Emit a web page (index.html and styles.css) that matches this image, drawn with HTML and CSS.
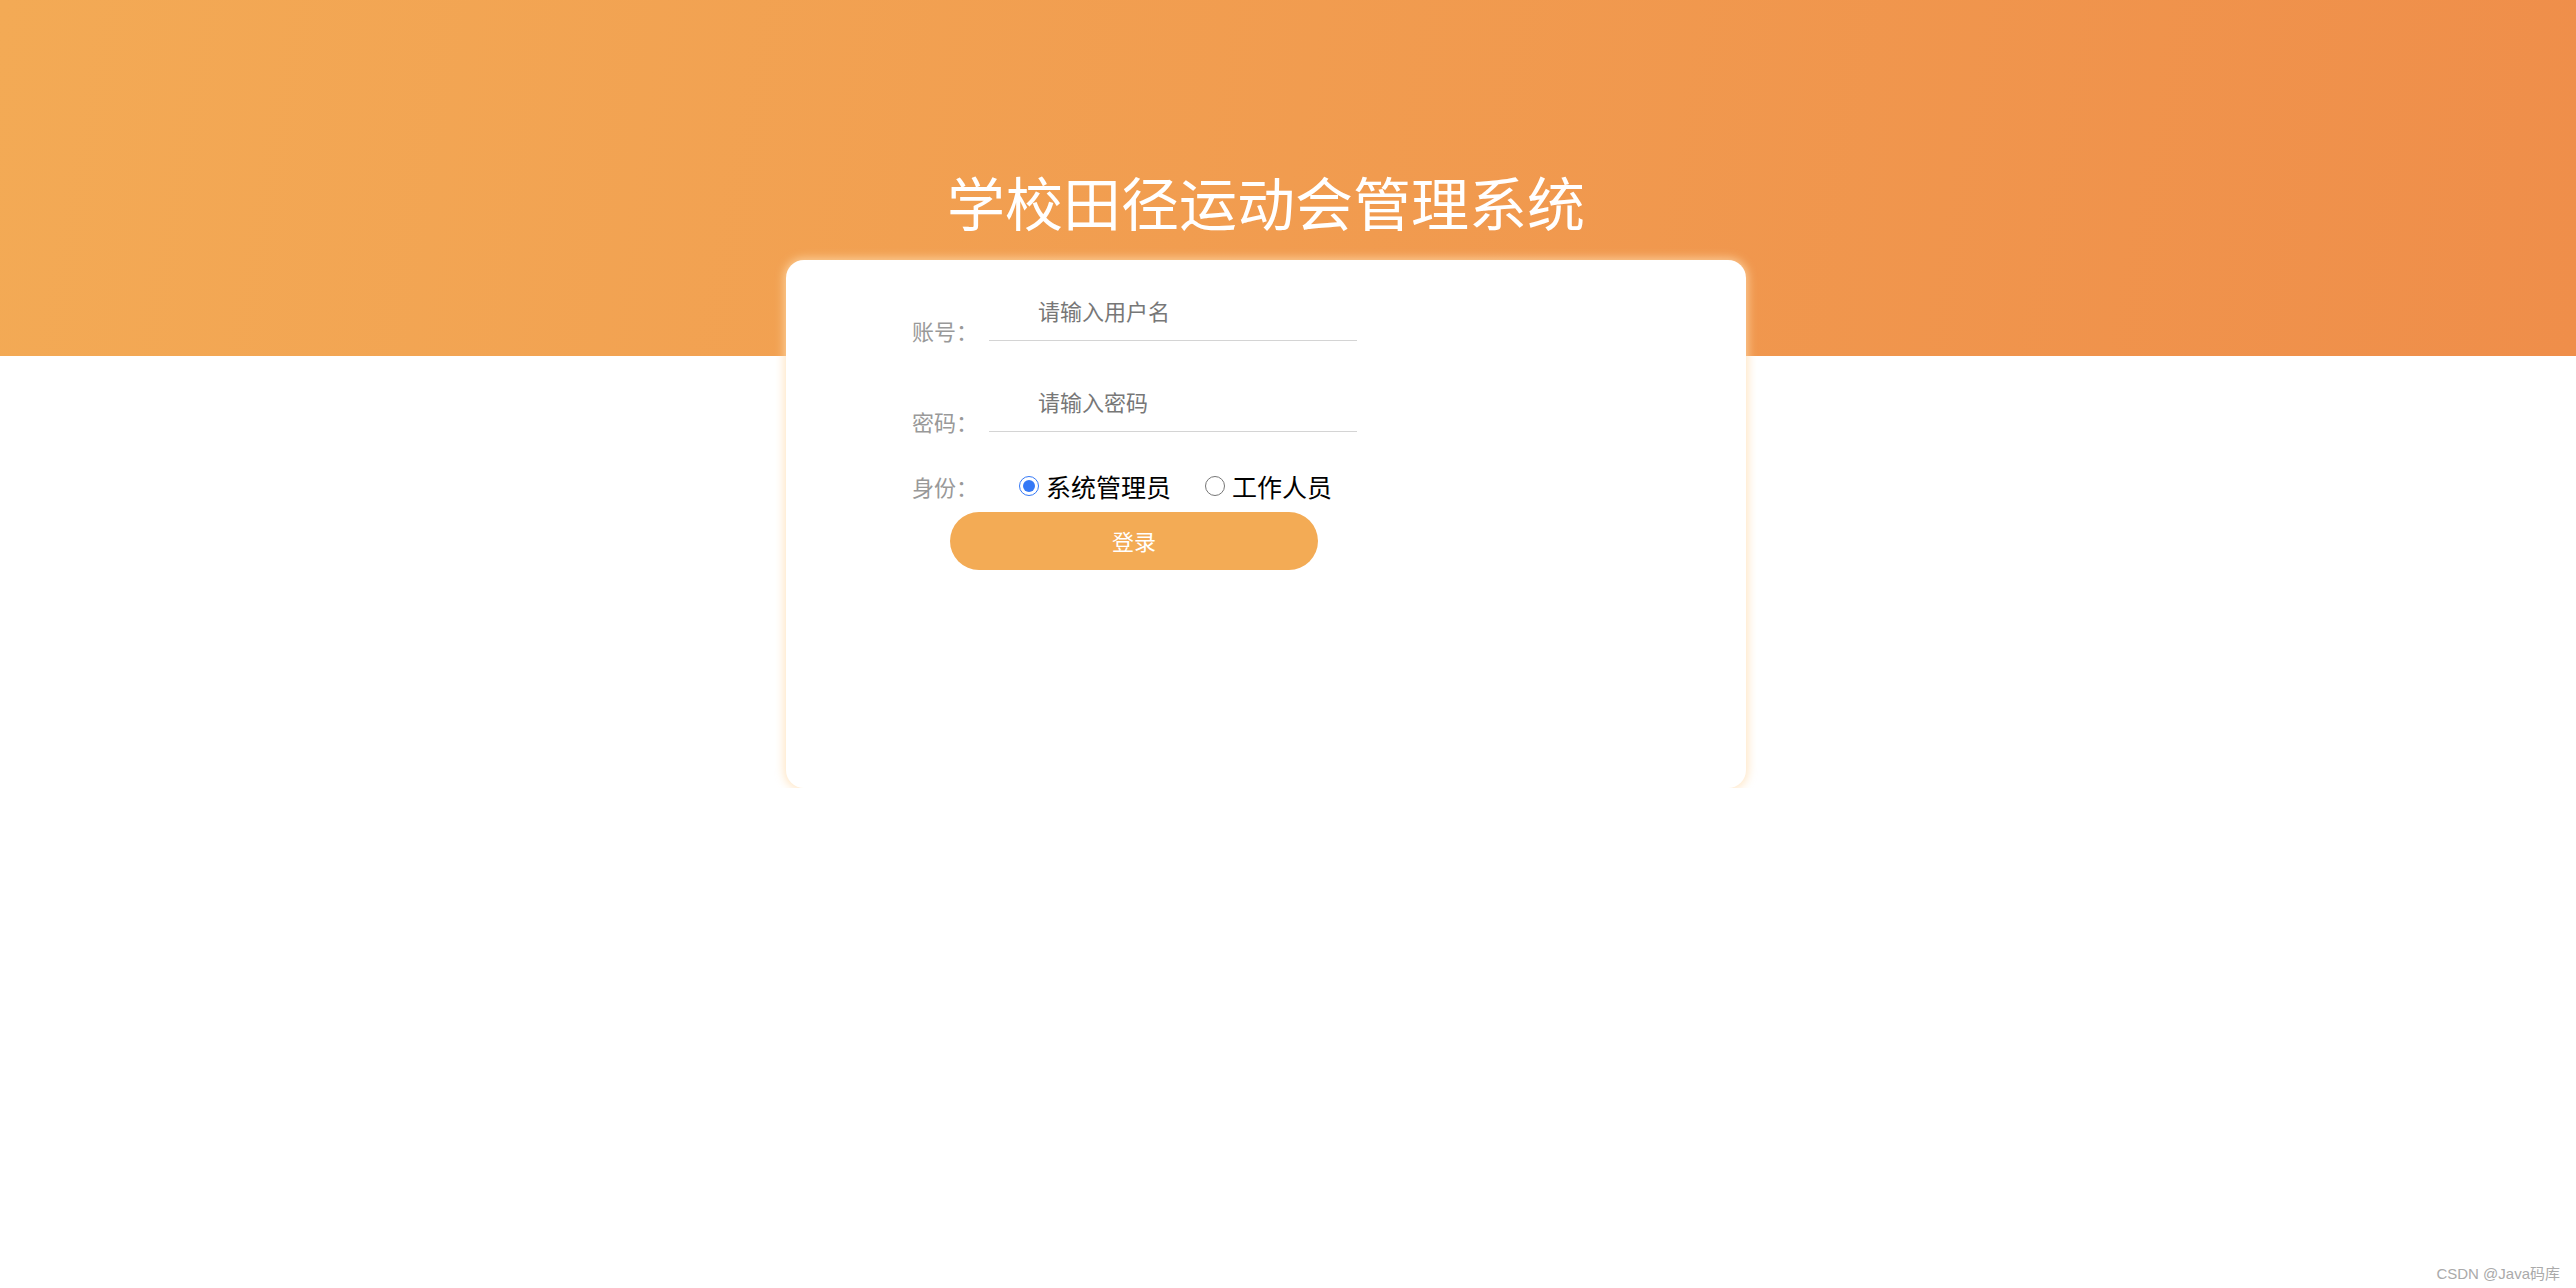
FILE: index.html
```html
<!DOCTYPE html>
<html lang="zh-CN">
<head>
    <meta charset="UTF-8">
    <meta name="viewport" content="width=device-width, initial-scale=1.0">
    <title>学校田径运动会管理系统</title>
    <link rel="stylesheet" href="styles.css">
</head>
<body>
    <div class="banner"></div>
    <div class="content">
        <h1 class="title">学校田径运动会管理系统</h1>
        <div class="card">
            <form class="login-form">
                <div class="form-row">
                    <label class="form-label" for="username">账号：</label>
                    <input class="form-input" type="text" id="username" placeholder="请输入用户名">
                </div>
                <div class="form-row">
                    <label class="form-label" for="password">密码：</label>
                    <input class="form-input" type="password" id="password" placeholder="请输入密码">
                </div>
                <div class="role-row">
                    <span class="form-label">身份：</span>
                    <label class="role-item">
                        <input type="radio" name="role" value="admin" checked>
                        <span>系统管理员</span>
                    </label>
                    <label class="role-item">
                        <input type="radio" name="role" value="staff">
                        <span>工作人员</span>
                    </label>
                </div>
                <button type="button" class="btn">登录</button>
            </form>
        </div>
    </div>
    <div class="watermark">CSDN @Java码库</div>
</body>
</html>
```

FILE: styles.css
```css
body {
    margin: 0;
    padding: 0;
    background: #fff;
    font-family: "Noto Sans CJK SC", "Noto Sans", sans-serif;
}
.banner {
    height: 356px;
    background: linear-gradient(100deg, #f3aa55, #ef8e4a);
}
.content {
    width: calc(100% - 44px);
    margin-top: -356px;
}
.title {
    margin: 172px 0 30px;
    text-align: center;
    color: #fff;
    font-size: 58px;
    line-height: 58px;
    font-weight: normal;
}
.card {
    width: 960px;
    height: 528px;
    margin: 0 auto;
    box-sizing: border-box;
    padding: 26px 0 0 126px;
    background: #fff;
    border-radius: 18px;
    box-shadow: 0 0 10px 2px rgba(255, 220, 175, 0.75);
}
.form-row {
    display: flex;
    align-items: flex-end;
    margin-bottom: 36px;
}
.form-label {
    width: 66px;
    margin-right: 11px;
    margin-bottom: -1px;
    font-size: 22px;
    line-height: 24px;
    color: #999;
}
.form-input {
    width: 368px;
    height: 55px;
    box-sizing: border-box;
    padding: 0 0 6px 49px;
    border: none;
    border-bottom: 1px solid #d4d4d4;
    outline: none;
    font-family: inherit;
    font-size: 22px;
    color: #333;
    background: transparent;
}
.form-input::placeholder {
    color: #777;
}
.role-row {
    display: flex;
    align-items: center;
    height: 32px;
    margin-top: 38px;
}
.role-row .form-label {
    margin-bottom: 0;
    margin-right: 41px;
}
.role-item {
    display: flex;
    align-items: center;
    margin-right: 34px;
    font-size: 25px;
    color: #000;
}
.role-item input {
    width: 20px;
    height: 20px;
    margin: 0 7px 0 0;
    accent-color: #3478f6;
}
.btn {
    display: block;
    width: 368px;
    height: 58px;
    margin: 10px 0 0 38px;
    padding: 0 0 3px;
    border: none;
    border-radius: 29px;
    background: #f3ab55;
    color: #fff;
    font-family: inherit;
    font-size: 22px;
    cursor: pointer;
}
.watermark {
    position: absolute;
    right: 16px;
    bottom: 5px;
    font-family: "Liberation Sans", "Noto Sans CJK SC", sans-serif;
    font-size: 15px;
    color: #aaa;
}
```
